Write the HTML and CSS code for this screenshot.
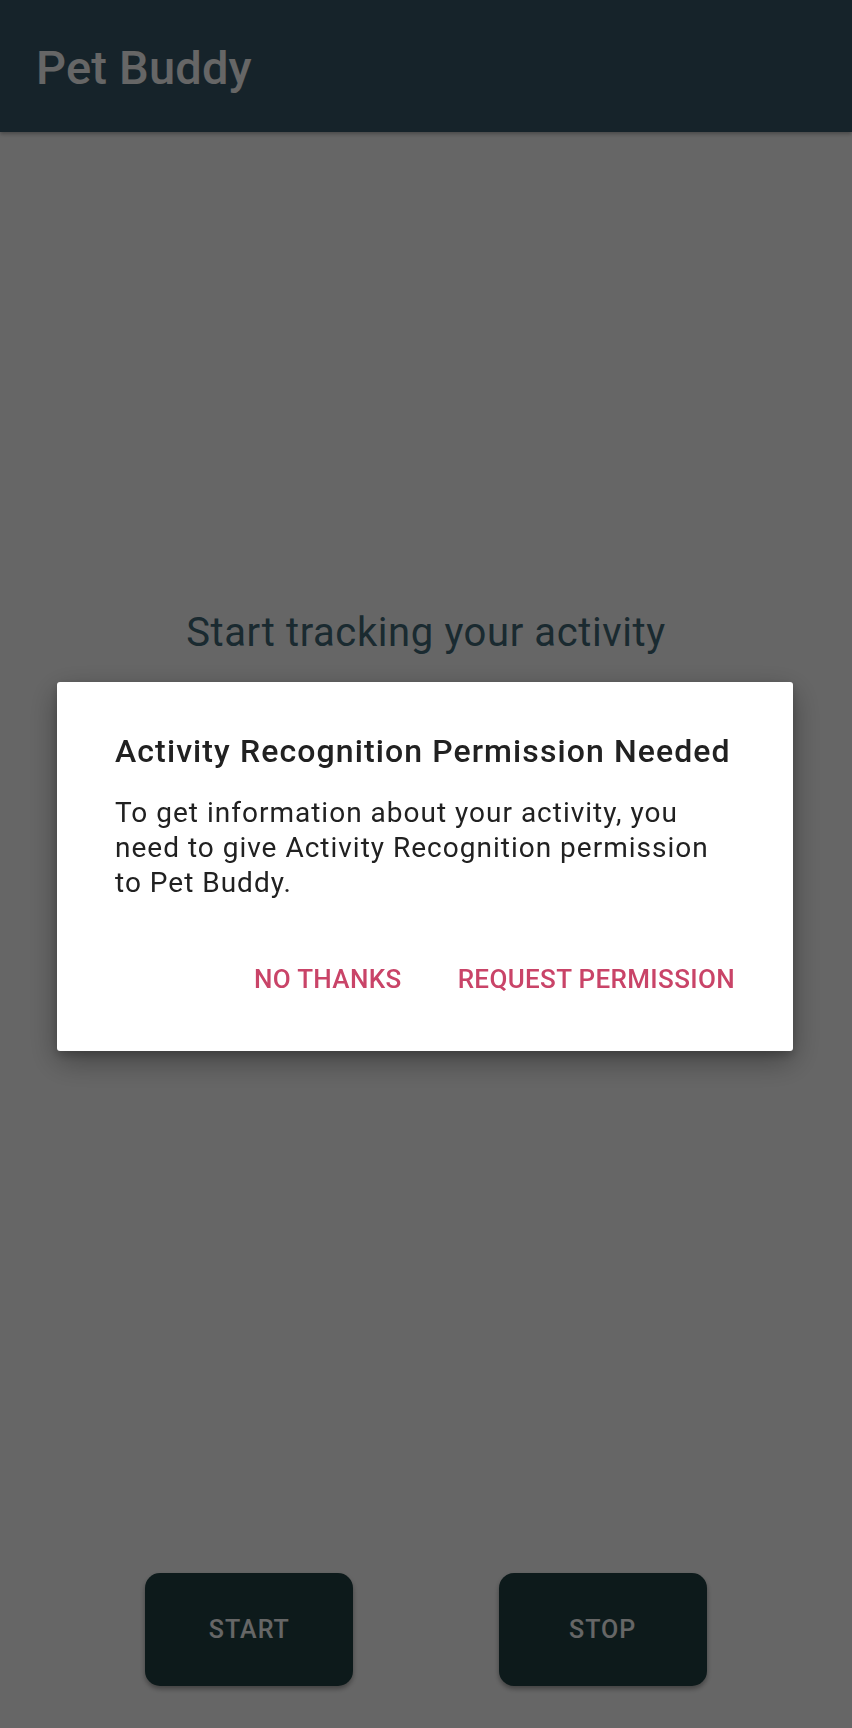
FILE: index.html
```html
<!DOCTYPE html>
<html lang="en">
<head>
  <meta charset="UTF-8" />
  <meta name="viewport" content="width=device-width, initial-scale=1" />
  <title>Pet Buddy</title>
  <link rel="stylesheet" href="styles.css">
</head>
<body>

  <header class="app-bar">
    <h1>Pet Buddy</h1>
  </header>

  <main class="content">
    <p class="prompt">Start tracking your activity</p>

    <div class="actions">
      <button class="track-btn" type="button">START</button>
      <button class="track-btn" type="button">STOP</button>
    </div>
  </main>

  <div class="scrim">
    <div class="dialog" role="dialog" aria-labelledby="dlgTitle">
      <h2 id="dlgTitle">Activity Recognition Permission Needed</h2>
      <p>To get information about your activity, you need to give Activity Recognition permission to Pet Buddy.</p>
      <div class="dialog-buttons">
        <button type="button">NO THANKS</button>
        <button type="button">REQUEST PERMISSION</button>
      </div>
    </div>
  </div>

</body>
</html>
```

FILE: styles.css
```css
* {
  box-sizing: border-box;
}
body {
  margin: 0;
  background: #ffffff;
  font-family: Roboto, 'Noto Sans', sans-serif;
  width: 852px;
  height: 1728px;
  overflow: hidden;
  display: flex;
  flex-direction: column;
}
.app-bar {
  height: 132px;
  background: #375869;
  padding: 0 36px;
  display: flex;
  align-items: center;
  box-shadow: 0 2px 4px rgba(0, 0, 0, 0.3);
}
.app-bar h1 {
  margin: 0;
  margin-top: 2px;
  font-size: 47px;
  font-weight: 500;
  letter-spacing: 0.2px;
  color: #ffffff;
}
.content {
  flex: 1;
  display: flex;
  flex-direction: column;
  padding: 477px 0 42px;
}
.prompt {
  margin: 0;
  text-align: center;
  font-size: 40px;
  line-height: 48px;
  letter-spacing: 0.6px;
  color: #426978;
}
.actions {
  margin-top: auto;
  display: flex;
  justify-content: space-evenly;
}
.track-btn {
  width: 208px;
  height: 113px;
  border: none;
  border-radius: 15px;
  background: #214244;
  color: #ffffff;
  font-family: Roboto, sans-serif;
  font-size: 25px;
  font-weight: 500;
  letter-spacing: 1px;
  box-shadow: 0 3px 5px rgba(0, 0, 0, 0.35);
}
.scrim {
  position: fixed;
  inset: 0;
  background: rgba(0, 0, 0, 0.6);
  display: flex;
  justify-content: center;
  align-items: flex-start;
  padding: 682px 2px 0 0;
}
.dialog {
  width: 736px;
  height: 369px;
  background: #ffffff;
  border-radius: 3px;
  padding: 49px 58px 56px;
  box-shadow: 0 10px 30px rgba(0, 0, 0, 0.35), 0 4px 10px rgba(0, 0, 0, 0.2);
}
.dialog h2 {
  margin: 0;
  font-size: 32px;
  line-height: 40px;
  font-weight: 500;
  letter-spacing: 1.1px;
  color: #212121;
}
.dialog p {
  margin: 24px 0 0;
  font-size: 28px;
  line-height: 35px;
  letter-spacing: 1px;
  color: #212121;
}
.dialog-buttons {
  margin-top: 63px;
  display: flex;
  justify-content: flex-end;
  gap: 56px;
}
.dialog-buttons button {
  border: none;
  background: none;
  padding: 0;
  font-family: Roboto, sans-serif;
  font-size: 26px;
  line-height: 32px;
  font-weight: 500;
  letter-spacing: 0.35px;
  color: #c94468;
}
```
